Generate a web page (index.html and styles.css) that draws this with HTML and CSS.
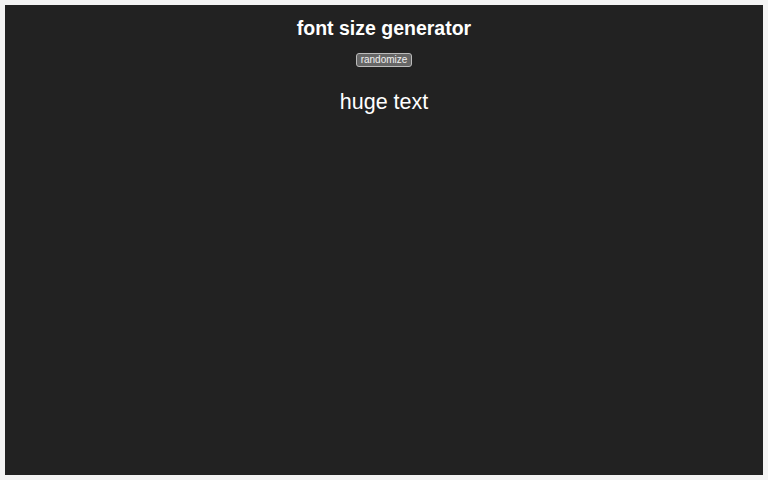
FILE: index.html
```html
<!DOCTYPE html>
<html>
<head>
<meta charset="utf-8">
<link rel="stylesheet" href="styles.css">
</head>
<body>
<div class="app">
  <h1 class="title">font size generator</h1>
  <div class="controls"><button class="btn">randomize</button></div>
  <p class="sample">huge text</p>
</div>
</body>
</html>
```
FILE: styles.css
```css
html, body { margin: 0; padding: 0; }
body {
  background: #f4f4f4;
  font-family: "Liberation Sans", Arial, sans-serif;
  padding: 5px;
}
.app {
  background: #222222;
  height: 470px;
  box-sizing: border-box;
  color: #ffffff;
  text-align: center;
  padding-top: 12px;
}
.title {
  margin: 0;
  font-size: 19.5px;
  font-weight: bold;
  line-height: 23px;
}
.controls {
  margin-top: 13px;
  line-height: 0;
}
.btn {
  font-family: "Liberation Sans", Arial, sans-serif;
  font-size: 10px;
  line-height: 12px;
  color: #f0f0f0;
  background: #666666;
  border: 1px solid #bbbbbb;
  border-radius: 3px;
  padding: 0 4px;
  height: 14px;
}
.sample {
  margin: 22px 0 0;
  font-size: 21.5px;
  line-height: 26px;
}
```
